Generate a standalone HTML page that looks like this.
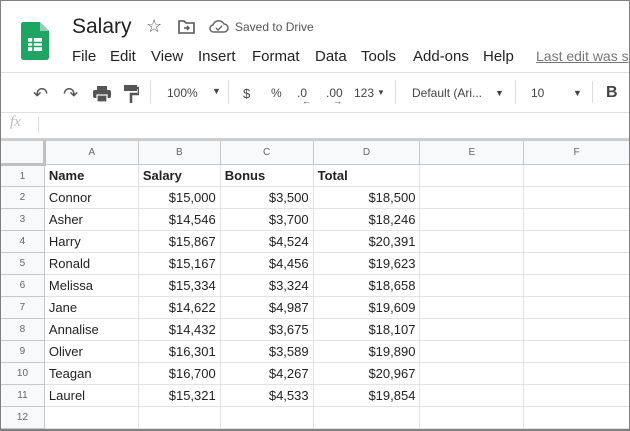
<!DOCTYPE html>
<html><head><meta charset="utf-8"><style>
*{margin:0;padding:0;box-sizing:border-box}
body{width:630px;height:431px;overflow:hidden;background:#fff;font-family:"Liberation Sans",Arial,sans-serif;position:relative}
.frame{position:absolute;left:0;top:0;width:630px;height:431px;border:1px solid #808080;border-bottom-width:2px;z-index:10;pointer-events:none}
.a{position:absolute;white-space:nowrap}
.m{position:absolute;top:48px;font-size:15px;color:#222;white-space:nowrap}
.tb{color:#444;font-size:12px}
.sep{position:absolute;top:81px;width:1px;height:22px;background:#ddd}
table{position:absolute;left:0;top:140px;border-collapse:collapse;font-size:13px;color:#222}
td{border:1px solid #e2e2e2;height:22px;padding:0 4px;overflow:hidden;white-space:nowrap}
td.h{background:#f8f9fa;color:#666;font-size:10px;text-align:center;border-color:#c8c8c8}
tr.hd td{height:24px}
.r{text-align:right}
b{font-weight:bold}
</style></head><body>
<div class="frame"></div>
<svg class="a" style="left:21px;top:22px" width="28" height="38" viewBox="0 0 28 38">
<path d="M2 0H19L28 9V35Q28 38 25 38H3Q0 38 0 35V3Q0 0 2 0Z" fill="#1fa463"/>
<path d="M19 0V9H28Z" fill="#8ed1b1"/>
<rect x="7" y="16" width="14" height="13" fill="#fff"/>
<path d="M7 20.5H21M7 24.5H21M12 16V29" stroke="#1fa463" stroke-width="1.6"/>
</svg>
<div class="a" style="left:72px;top:15px;font-size:21px;color:#222">Salary</div>
<div class="a" style="left:146px;top:16px;font-size:18px;color:#555">☆</div>
<svg class="a" style="left:178px;top:20px" width="17" height="14" viewBox="0 0 17 14"><path d="M1 1H6L8 3H16V13H1Z" fill="none" stroke="#555" stroke-width="1.6"/><path d="M6 8H11M9 6L11 8L9 10" fill="none" stroke="#555" stroke-width="1.4"/></svg>
<svg class="a" style="left:209px;top:19px" width="20" height="15" viewBox="0 0 20 15"><path d="M5 13H15A4 4 0 0 0 15 5A6 6 0 0 0 4 6A3.5 3.5 0 0 0 5 13Z" fill="none" stroke="#666" stroke-width="1.5"/><path d="M7 9L9 11L13 7" fill="none" stroke="#666" stroke-width="1.4"/></svg>
<div class="a" style="left:235px;top:20px;font-size:12px;color:#555">Saved to Drive</div>
<span class="m" style="left:72px">File</span>
<span class="m" style="left:110px">Edit</span>
<span class="m" style="left:151px">View</span>
<span class="m" style="left:198px">Insert</span>
<span class="m" style="left:252px">Format</span>
<span class="m" style="left:315px">Data</span>
<span class="m" style="left:361px">Tools</span>
<span class="m" style="left:413px">Add-ons</span>
<span class="m" style="left:483px">Help</span>
<div class="a" style="left:536px;top:48px;font-size:14px;color:#777;text-decoration:underline">Last edit was s</div>
<div class="a" style="left:0;top:72px;width:630px;height:1px;background:#e0e0e0"></div>
<div class="a tb" style="left:33px;top:84px;font-size:18px;color:#555">↶</div>
<div class="a tb" style="left:63px;top:84px;font-size:18px;color:#555">↷</div>
<svg class="a" style="left:93px;top:86px" width="18" height="16" viewBox="0 0 18 16"><rect x="4" y="0" width="10" height="4" fill="#555"/><rect x="0" y="4" width="18" height="8" rx="2" fill="#555"/><rect x="4" y="9" width="10" height="7" fill="#555" stroke="#fff" stroke-width="1.2"/></svg>
<svg class="a" style="left:124px;top:85px" width="15" height="18" viewBox="0 0 15 18"><rect x="0" y="0" width="13" height="6" fill="#555"/><path d="M13 3H15V9H7V18" fill="none" stroke="#555" stroke-width="2.5"/></svg>
<div class="sep" style="left:150px"></div>
<div class="a tb" style="left:167px;top:86px">100%</div>
<div class="a tb" style="left:212px;top:86px;font-size:9px">▼</div>
<div class="sep" style="left:228px"></div>
<div class="a tb" style="left:243px;top:86px;font-size:13px">$</div>
<div class="a tb" style="left:271px;top:86px">%</div>
<div class="a tb" style="left:297px;top:86px">.0</div>
<div class="a tb" style="left:302px;top:96px;font-size:9px">←</div>
<div class="a tb" style="left:326px;top:86px">.00</div>
<div class="a tb" style="left:333px;top:96px;font-size:9px">→</div>
<div class="a tb" style="left:354px;top:86px">123</div>
<div class="a tb" style="left:377px;top:88px;font-size:8px">▼</div>
<div class="sep" style="left:395px"></div>
<div class="a tb" style="left:412px;top:86px">Default (Ari...</div>
<div class="a tb" style="left:495px;top:88px;font-size:9px">▼</div>
<div class="sep" style="left:515px"></div>
<div class="a tb" style="left:531px;top:86px">10</div>
<div class="a tb" style="left:573px;top:88px;font-size:9px">▼</div>
<div class="sep" style="left:592px"></div>
<div class="a" style="left:606px;top:84px;font-size:16px;font-weight:bold;color:#444">B</div>
<div class="a" style="left:0;top:112px;width:630px;height:1px;background:#e0e0e0"></div>
<div class="a" style="left:10px;top:114px;font-size:15px;font-style:italic;color:#bbb;font-family:'Liberation Serif',serif">fx</div>
<div class="a" style="left:38px;top:117px;width:1px;height:16px;background:#ddd"></div>
<div class="a" style="left:0;top:138px;width:630px;height:2px;background:#d0d0d0"></div>
<table>
<colgroup><col style="width:44px"><col style="width:94px"><col style="width:82px"><col style="width:93px"><col style="width:107px"><col style="width:104px"><col style="width:106px"></colgroup>
<tr class="hd"><td class="h" style="border-right:3px solid #c0c0c0;border-bottom:3px solid #c0c0c0"></td><td class="h">A</td><td class="h">B</td><td class="h">C</td><td class="h">D</td><td class="h">E</td><td class="h">F</td></tr>
<tr><td class="h">1</td><td><b>Name</b></td><td><b>Salary</b></td><td><b>Bonus</b></td><td><b>Total</b></td><td></td><td></td></tr>
<tr><td class="h">2</td><td>Connor</td><td class="r">$15,000</td><td class="r">$3,500</td><td class="r">$18,500</td><td></td><td></td></tr>
<tr><td class="h">3</td><td>Asher</td><td class="r">$14,546</td><td class="r">$3,700</td><td class="r">$18,246</td><td></td><td></td></tr>
<tr><td class="h">4</td><td>Harry</td><td class="r">$15,867</td><td class="r">$4,524</td><td class="r">$20,391</td><td></td><td></td></tr>
<tr><td class="h">5</td><td>Ronald</td><td class="r">$15,167</td><td class="r">$4,456</td><td class="r">$19,623</td><td></td><td></td></tr>
<tr><td class="h">6</td><td>Melissa</td><td class="r">$15,334</td><td class="r">$3,324</td><td class="r">$18,658</td><td></td><td></td></tr>
<tr><td class="h">7</td><td>Jane</td><td class="r">$14,622</td><td class="r">$4,987</td><td class="r">$19,609</td><td></td><td></td></tr>
<tr><td class="h">8</td><td>Annalise</td><td class="r">$14,432</td><td class="r">$3,675</td><td class="r">$18,107</td><td></td><td></td></tr>
<tr><td class="h">9</td><td>Oliver</td><td class="r">$16,301</td><td class="r">$3,589</td><td class="r">$19,890</td><td></td><td></td></tr>
<tr><td class="h">10</td><td>Teagan</td><td class="r">$16,700</td><td class="r">$4,267</td><td class="r">$20,967</td><td></td><td></td></tr>
<tr><td class="h">11</td><td>Laurel</td><td class="r">$15,321</td><td class="r">$4,533</td><td class="r">$19,854</td><td></td><td></td></tr>
<tr><td class="h">12</td><td></td><td></td><td></td><td></td><td></td><td></td></tr>
</table>
</body></html>
